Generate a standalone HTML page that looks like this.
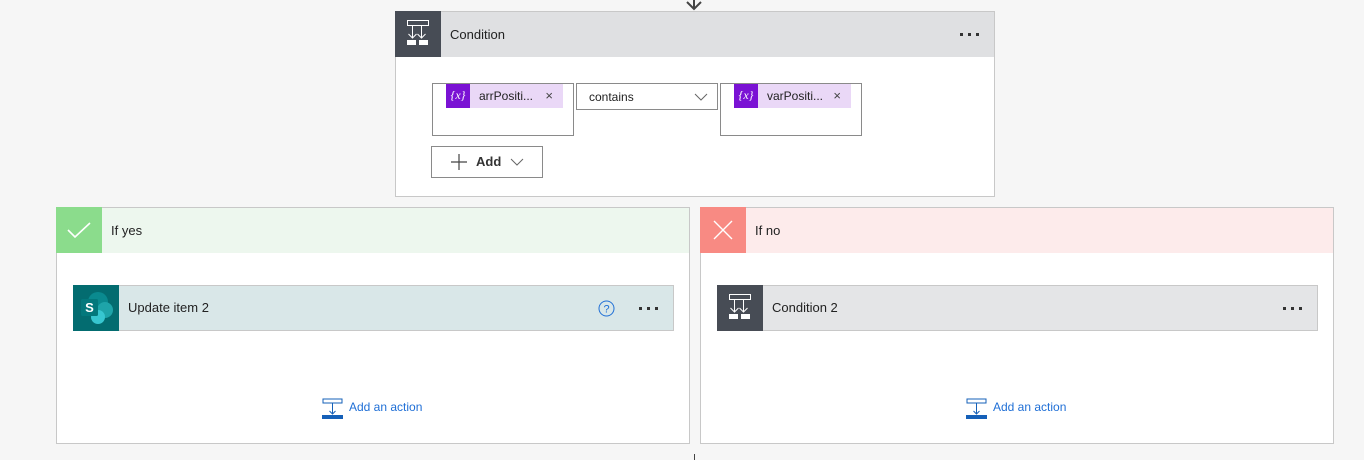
<!DOCTYPE html>
<html><head><meta charset="utf-8"><style>
*{box-sizing:border-box;margin:0;padding:0}
body{width:1364px;height:460px;background:#f6f6f6;font-family:"Segoe UI","Liberation Sans",sans-serif;font-size:13px;color:#222;position:relative;overflow:hidden}
.abs{position:absolute}
.box{position:absolute;background:#fff;border:1px solid #c8c8c8}
.hdr{position:absolute;left:0;top:0;right:0;height:45px}
.ico{position:absolute;left:0;top:0;width:45px;height:45px}
.t{position:absolute;left:54px;top:0;line-height:45px;font-size:13px;color:#222}
.dots{position:absolute;right:14px;top:21px;width:20px;height:3px}
.dots i{position:absolute;top:0;width:2.5px;height:2.5px;background:#333}
.card{position:absolute;height:46px;border:1px solid #c8c8c8}
.inp{position:absolute;border:1px solid #8a8a8a;background:#fff}
.tok{position:absolute;left:13px;top:0;height:24px;background:#ead8f7}
.tok .p{position:absolute;left:0;top:0;width:24px;height:24px;background:#7a12d4;color:#fff;font-family:"Liberation Serif",serif;font-style:italic;font-size:12px;text-align:center;line-height:22px}
.tok .n{position:absolute;left:33px;top:0;line-height:24px;font-size:12px}
.tok .x{position:absolute;right:10px;top:0;line-height:24px;font-size:13px;color:#444}
.aa{position:absolute;font-size:12px;color:#1f6fd6}
</style></head><body>
<svg class="abs" style="left:684px;top:0" width="20" height="12"><path d="M10 0V9M3 2L10 9L17 2" stroke="#444" stroke-width="2" fill="none"/></svg>
<div class="abs" style="left:694px;top:454px;width:1px;height:6px;background:#444"></div>

<!-- Condition -->
<div class="box" style="left:395px;top:11px;width:600px;height:186px">
 <div class="hdr" style="background:#dfe0e2"></div>
 <div class="ico" style="background:#474c55;left:-1px;top:-1px;width:46px;height:46px">
  <svg width="46" height="46"><rect x="12.5" y="9.5" width="21" height="5" fill="none" stroke="#fff"/><path d="M17.5 14V27M13.5 23l4 4 4-4M26.5 14V27M22.5 23l4 4 4-4" stroke="#fff" fill="none"/><rect x="12" y="29" width="9" height="5" fill="#fff"/><rect x="24" y="29" width="9" height="5" fill="#fff"/></svg>
 </div>
 <div class="t">Condition</div>
 <div class="dots"><i style="left:0"></i><i style="left:8px"></i><i style="left:16px"></i></div>
 <div class="inp" style="left:36px;top:71px;width:142px;height:53px"><div class="tok" style="width:117px"><div class="p">{x}</div><div class="n">arrPositi...</div><div class="x">×</div></div></div>
 <div class="inp" style="left:180px;top:71px;width:142px;height:27px"><span class="abs" style="left:12px;top:0;line-height:26px;font-size:12px">contains</span><svg class="abs" style="left:117px;top:9px" width="14" height="8"><path d="M1 1l6 6 6-6" stroke="#666" fill="none"/></svg></div>
 <div class="inp" style="left:324px;top:71px;width:142px;height:53px"><div class="tok" style="width:117px"><div class="p">{x}</div><div class="n">varPositi...</div><div class="x">×</div></div></div>
 <div class="inp" style="left:35px;top:134px;width:112px;height:32px"><svg class="abs" style="left:19px;top:7px" width="16" height="16"><path d="M8 0V16M0 8H16" stroke="#444" stroke-width="1.2"/></svg><span class="abs" style="left:44px;top:0;line-height:30px;font-weight:bold;font-size:13px;color:#333">Add</span><svg class="abs" style="left:78px;top:11px" width="14" height="8"><path d="M1 1l6 6 6-6" stroke="#666" fill="none"/></svg></div>
</div>

<!-- If yes -->
<div class="box" style="left:56px;top:207px;width:634px;height:237px">
 <div class="hdr" style="background:#edf7ee"></div>
 <div class="ico" style="background:#8bdc8c;left:-1px;top:-1px;width:46px;height:46px"><svg width="46" height="46"><path d="M12 23l7 7 15-14" stroke="#fff" stroke-width="1.6" fill="none"/></svg></div>
 <div class="t">If yes</div>
 <div class="card" style="left:16px;top:77px;width:601px;background:#d9e7e8">
  <div class="abs" style="left:-1px;top:-1px;width:46px;height:46px;background:#036c70"><svg width="46" height="46"><circle cx="25" cy="17" r="10" fill="#0a8a8f"/><circle cx="32" cy="25" r="8" fill="#1ea4a9"/><circle cx="25" cy="32" r="7" fill="#37c6d0"/><rect x="8" y="14" width="17" height="17" rx="1.5" fill="#03787c"/><text x="16.5" y="27" text-anchor="middle" font-family="Liberation Sans" font-weight="bold" font-size="13" fill="#fff">S</text></svg></div>
  <div class="abs" style="left:54px;top:0;line-height:44px">Update item 2</div>
  <svg class="abs" style="left:524px;top:14px" width="17" height="17"><circle cx="8.5" cy="8.5" r="7.5" stroke="#1f6fd6" fill="none"/><text x="8.5" y="12.5" text-anchor="middle" font-family="Liberation Sans" font-size="11" fill="#1f6fd6">?</text></svg>
  <div class="dots"><i style="left:0"></i><i style="left:8px"></i><i style="left:16px"></i></div>
 </div>
 <svg class="abs" style="left:265px;top:190px" width="22" height="22"><rect x="1" y="1" width="19" height="4" fill="none" stroke="#1560b8"/><path d="M10.5 5V16M7.5 13l3 3 3-3" stroke="#1560b8" fill="none"/><rect x="0" y="17" width="21" height="4" fill="#1560b8"/></svg>
 <div class="aa" style="left:292px;top:192px">Add an action</div>
</div>

<!-- If no -->
<div class="box" style="left:700px;top:207px;width:634px;height:237px">
 <div class="hdr" style="background:#fdebeb"></div>
 <div class="ico" style="background:#f88a83;left:-1px;top:-1px;width:46px;height:46px"><svg width="46" height="46"><path d="M14 14L32 32M32 14L14 32" stroke="#fff" stroke-width="1.4"/></svg></div>
 <div class="t">If no</div>
 <div class="card" style="left:16px;top:77px;width:601px;background:#e4e5e7">
  <div class="abs" style="left:-1px;top:-1px;width:46px;height:46px;background:#474c55"><svg width="46" height="46"><rect x="12.5" y="9.5" width="21" height="5" fill="none" stroke="#fff"/><path d="M17.5 14V27M13.5 23l4 4 4-4M26.5 14V27M22.5 23l4 4 4-4" stroke="#fff" fill="none"/><rect x="12" y="29" width="9" height="5" fill="#fff"/><rect x="24" y="29" width="9" height="5" fill="#fff"/></svg></div>
  <div class="abs" style="left:54px;top:0;line-height:44px">Condition 2</div>
  <div class="dots"><i style="left:0"></i><i style="left:8px"></i><i style="left:16px"></i></div>
 </div>
 <svg class="abs" style="left:265px;top:190px" width="22" height="22"><rect x="1" y="1" width="19" height="4" fill="none" stroke="#1560b8"/><path d="M10.5 5V16M7.5 13l3 3 3-3" stroke="#1560b8" fill="none"/><rect x="0" y="17" width="21" height="4" fill="#1560b8"/></svg>
 <div class="aa" style="left:292px;top:192px">Add an action</div>
</div>
</body></html>
